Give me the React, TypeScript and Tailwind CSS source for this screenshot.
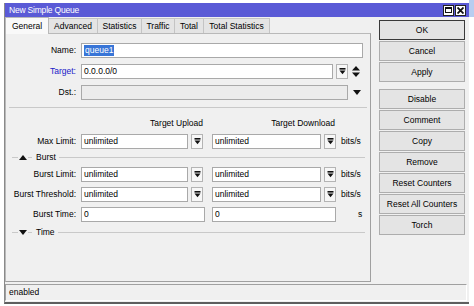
import React from 'react';

const line = 'border-t border-[#c9c9c9]';

function DropBtn() {
  return (
    <div className="w-[12px] h-[15px] border border-[#b4b4b4] bg-[#f7f7f7] flex items-center justify-center shrink-0">
      <svg width="7" height="7" viewBox="0 0 7 7">
        <rect x="0.5" y="0" width="6" height="1.6" fill="#111" />
        <path d="M0.5 2.6h6L3.5 6.2z" fill="#111" />
      </svg>
    </div>
  );
}

function Field({ w, children, disabled }: { w: number; children?: React.ReactNode; disabled?: boolean }) {
  return (
    <div
      className={`h-[15px] border border-[#a9a9a9] flex items-center pl-[2px] shrink-0 ${disabled ? 'bg-[#ececec]' : 'bg-white'}`}
      style={{ width: w }}
    >
      {children}
    </div>
  );
}

function Label({ text, blue }: { text: string; blue?: boolean }) {
  return (
    <div className={`w-[71px] text-right pr-[1px] shrink-0 ${blue ? 'text-[#2020c8]' : 'text-black'}`}>{text}</div>
  );
}

function Group({ title, open }: { title: string; open?: boolean }) {
  return (
    <div className="flex items-center h-[9px] pr-[5px]">
      <div className={`w-[6px] ml-[6px] ${line}`} />
      <svg width="8" height="5" viewBox="0 0 8 5" className="mx-[1px]">
        {open ? <path d="M0 0h8L4 5z" fill="#111" /> : <path d="M0 5h8L4 0z" fill="#111" />}
      </svg>
      <div className={`w-[4px] ${line}`} />
      <span className="ml-[4px] mr-[3px]">{title}</span>
      <div className={`flex-1 ${line}`} />
    </div>
  );
}

const tabs = [
  ['General', 44],
  ['Advanced', 49],
  ['Statistics', 44],
  ['Traffic', 33],
  ['Total', 29],
  ['Total Statistics', 66],
] as const;

const btnsA = ['OK', 'Cancel', 'Apply'];
const btnsB = ['Disable', 'Comment', 'Copy', 'Remove', 'Reset Counters', 'Reset All Counters', 'Torch'];

function Btn({ label, primary }: { label: string; primary?: boolean }) {
  return (
    <div
      className={`h-[20px] w-[86px] flex items-center justify-center bg-[#e4e4e4] border ${primary ? 'border-[#3a3a3a]' : 'border-[#adadad]'}`}
    >
      {label}
    </div>
  );
}

export default function App() {
  return (
    <div className="w-[474px] h-[306px] bg-white flex font-['Liberation_Sans',Arial,sans-serif] text-[8.5px] text-black leading-none">
      <div className="w-[4px]" />
      <div className="mt-[3px] w-[465px] h-[301px] bg-[#f0f0f0] border-l border-[#8a8a8a] border-b-2 border-b-[#5f5f5f] flex flex-col">
        {/* title bar */}
        <div className="h-[14px] bg-[#5a5ad6] flex items-center pl-[4px] pr-[3px] shrink-0">
          <span className="text-white text-[8.5px] tracking-[-0.2px]">New Simple Queue</span>
          <div className="ml-auto flex gap-[1px]">
            <div className="w-[11px] h-[11px] bg-white border border-[#222] flex items-center justify-center">
              <div className="w-[7px] h-[6px] border border-[#111] border-t-2" />
            </div>
            <div className="w-[11px] h-[11px] bg-white border border-[#222] flex items-center justify-center">
              <svg width="7" height="7" viewBox="0 0 7 7">
                <path d="M0.5 0.5L6.5 6.5M6.5 0.5L0.5 6.5" stroke="#111" strokeWidth="1.8" />
              </svg>
            </div>
          </div>
        </div>

        <div className="flex flex-1">
          {/* left: tabs + panel */}
          <div className="w-[366px] flex flex-col">
            <div className="h-[16px] flex items-end">
              {tabs.map(([t, w], i) =>
                i === 0 ? (
                  <div
                    key={t}
                    className="h-[17px] -mb-px z-10 bg-[#f9f9f9] border border-b-0 border-[#b9b9b9] flex items-center justify-center"
                    style={{ width: w }}
                  >
                    {t}
                  </div>
                ) : (
                  <div
                    key={t}
                    className="h-[15px] bg-[#e4e4e4] border-t border-r border-[#c4c4c4] flex items-center justify-center"
                    style={{ width: w }}
                  >
                    {t}
                  </div>
                )
              )}
            </div>
            <div className="flex-1 border border-[#b9b9b9] border-r-[#a0a0a0] border-b-[#a0a0a0] pt-[9px] flex flex-col">
              <div className="flex items-center">
                <Label text="Name:" />
                <div className="ml-[4px]">
                  <Field w={282}>
                    <span className="bg-[#3875d7] text-white px-[1px] h-[11px] flex items-center">queue1</span>
                  </Field>
                </div>
              </div>
              <div className="flex items-center mt-[6px]">
                <Label text="Target:" blue />
                <div className="ml-[4px] flex items-center">
                  <Field w={252}>0.0.0.0/0</Field>
                  <div className="ml-[3px]">
                    <DropBtn />
                  </div>
                  <svg width="8" height="11" viewBox="0 0 8 11" className="ml-[4px]">
                    <path d="M0 4.5h8L4 0z" fill="#111" />
                    <path d="M0 6.5h8L4 11z" fill="#111" />
                  </svg>
                </div>
              </div>
              <div className="flex items-center mt-[6px]">
                <Label text="Dst.:" />
                <div className="ml-[4px] flex items-center">
                  <Field w={267} disabled />
                  <svg width="8" height="5" viewBox="0 0 8 5" className="ml-[5px]">
                    <path d="M0 0h8L4 5z" fill="#111" />
                  </svg>
                </div>
              </div>

              <div className={`mt-[7px] mx-[3px] ${line}`} />

              <div className="flex mt-[10px] h-[10px] items-center">
                <div className="w-[75px]" />
                <div className="w-[122px] text-right">Target Upload</div>
                <div className="w-[9px]" />
                <div className="w-[123px] text-right">Target Download</div>
              </div>

              <div className="flex items-center mt-[6px]">
                <Label text="Max Limit:" />
                <div className="ml-[4px] flex items-center">
                  <Field w={107}>unlimited</Field>
                  <div className="ml-[3px]"><DropBtn /></div>
                  <div className="ml-[9px]"><Field w={109}>unlimited</Field></div>
                  <div className="ml-[3px]"><DropBtn /></div>
                  <span className="ml-[5px]">bits/s</span>
                </div>
              </div>

              <div className="mt-[4px]">
                <Group title="Burst" />
              </div>

              {['Burst Limit:', 'Burst Threshold:'].map((l, i) => (
                <div key={l} className={`flex items-center ${i === 0 ? 'mt-[5px]' : 'mt-[5px]'}`}>
                  <Label text={l} />
                  <div className="ml-[4px] flex items-center">
                    <Field w={107}>unlimited</Field>
                    <div className="ml-[3px]"><DropBtn /></div>
                    <div className="ml-[9px]"><Field w={109}>unlimited</Field></div>
                    <div className="ml-[3px]"><DropBtn /></div>
                    <span className="ml-[5px]">bits/s</span>
                  </div>
                </div>
              ))}

              <div className="flex items-center mt-[5px]">
                <Label text="Burst Time:" />
                <div className="ml-[4px] flex items-center">
                  <Field w={124}>0</Field>
                  <div className="ml-[7px]"><Field w={124}>0</Field></div>
                  <span className="ml-[22px]">s</span>
                </div>
              </div>

              <div className="mt-[6px]">
                <Group title="Time" open />
              </div>
            </div>
          </div>

          {/* right: buttons */}
          <div className="ml-[8px] pt-[3px] flex flex-col gap-[1px]">
            {btnsA.map((b, i) => (
              <Btn key={b} label={b} primary={i === 0} />
            ))}
            <div className="h-[5px]" />
            {btnsB.map((b) => (
              <Btn key={b} label={b} />
            ))}
          </div>
        </div>

        {/* status bar */}
        <div className="mt-[2px] mb-[1px] h-[17px] w-[462px] border-t border-l border-[#a0a0a0] border-b border-r border-b-white border-r-white flex items-center pl-[3px]">
          enabled
        </div>
      </div>
      <div className="w-[5px] flex flex-col">
        <div className="h-[17px] bg-[#b8cdf0]" />
      </div>
    </div>
  );
}
